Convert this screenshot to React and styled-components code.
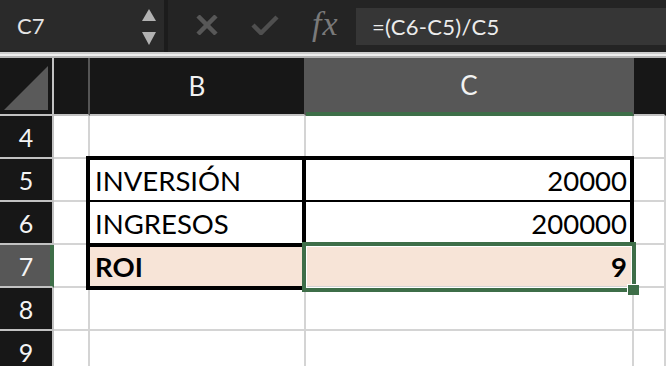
import React from "react";
import styled, { createGlobalStyle, css } from "styled-components";

const GREEN = "#3e6e48";
const GRID = "#d4d4d4";
const HEAD_LINE = "#c2c2c2";
const PEACH = "#f7e4d7";
const THICK = 4;

const GlobalStyle = createGlobalStyle`
  html, body {
    margin: 0;
    padding: 0;
    background: #fff;
    overflow: hidden;
  }
  body {
    font-family: Lato, "Open Sans", sans-serif;
  }
`;

// A and D are only partly visible, so their headers carry no label
const columns = [
  { key: "A", line: "#555555" },
  { key: "B", label: "B", line: "#575757" },
  { key: "C", label: "C", line: "#575757", active: true },
  { key: "D", line: "transparent" },
];

const rows = [
  { n: 4, cells: {} },
  {
    n: 5,
    cells: {
      B: { text: "INVERSIÓN", frame: { t: THICK, l: THICK, r: THICK, b: 2 } },
      C: { text: "20000", align: "right", frame: { t: THICK, r: THICK, b: 2 } },
    },
  },
  {
    n: 6,
    cells: {
      B: { text: "INGRESOS", frame: { l: THICK, r: THICK, b: THICK } },
      C: { text: "200000", align: "right", frame: { r: THICK, b: THICK } },
    },
  },
  {
    n: 7,
    active: true,
    cells: {
      B: { text: "ROI", bold: true, fill: PEACH, frame: { l: THICK, r: THICK, b: THICK } },
      C: { text: "9", bold: true, fill: PEACH, align: "right", selected: true },
    },
  },
  { n: 8, cells: {} },
  { n: 9, cells: {} },
];

const App = () => {
  return (
    <Window>
      <GlobalStyle />
      <TopBar>
        <NameBox>
          C7
          <svg width="14" height="36" viewBox="0 0 14 36">
            <polygon points="7,0 14,12 0,12" fill="#b2b2b2" />
            <polygon points="0,23 14,23 7,36" fill="#b2b2b2" />
          </svg>
        </NameBox>
        <Divider />
        <Tools>
          <svg width="22" height="20" viewBox="0 0 22 20">
            <path d="M2 1 L20 19 M20 1 L2 19" stroke="#575757" strokeWidth="4.5" fill="none" />
          </svg>
          <svg width="28" height="20" viewBox="0 0 28 20">
            <path d="M2 10 L10 18 L26 2" stroke="#4f4f4f" strokeWidth="4.5" fill="none" />
          </svg>
          <FxLabel>fx</FxLabel>
        </Tools>
        <FormulaBox>=(C6-C5)/C5</FormulaBox>
      </TopBar>
      <Band />
      <Sheet>
        <HeadCell $line={HEAD_LINE}>
          <Corner width="52" height="56" viewBox="0 0 52 56">
            <polygon points="4,52 48,8 48,52" fill="#5a5a5a" />
          </Corner>
        </HeadCell>
        {columns.map((c) => (
          <HeadCell key={c.key} $line={c.line} $active={c.active}>
            {c.label}
          </HeadCell>
        ))}
        {rows.map((r) => (
          <React.Fragment key={r.n}>
            <RowHead $active={r.active}>{r.n}</RowHead>
            {columns.map((c) => {
              const cell = r.cells[c.key] || {};
              return (
                <Cell
                  key={c.key}
                  $fill={cell.fill}
                  $bold={cell.bold}
                  $align={cell.align}
                  $frame={cell.frame}
                >
                  {cell.text}
                  {cell.selected && (
                    <Selection>
                      <FillHandle />
                    </Selection>
                  )}
                </Cell>
              );
            })}
          </React.Fragment>
        ))}
      </Sheet>
    </Window>
  );
};

export default App;

const Window = styled.div`
  width: 666px;
  height: 366px;
  overflow: hidden;
  display: flex;
  flex-direction: column;
  background: #fff;
`;

const TopBar = styled.div`
  display: flex;
  height: 52px;
  flex-shrink: 0;
  background: #242424;
`;

const NameBox = styled.div`
  width: 164px;
  height: 50px;
  box-sizing: border-box;
  padding: 0 8px 0 17px;
  background: #2a2a2a;
  display: flex;
  align-items: center;
  justify-content: space-between;
  color: #e4e4e4;
  font-size: 22px;

  svg {
    margin-top: 4px;
  }
`;

const Divider = styled.div`
  width: 4px;
  background: #1c1c1c;
`;

const Tools = styled.div`
  width: 188px;
  height: 50px;
  box-sizing: border-box;
  padding-left: 28px;
  display: flex;
  align-items: center;
  gap: 33px;
`;

const FxLabel = styled.span`
  font-family: "Liberation Serif", "DejaVu Serif", serif;
  font-style: italic;
  font-size: 34px;
  letter-spacing: 1px;
  color: #7a7a7a;
  margin-top: -2px;
`;

const FormulaBox = styled.div`
  flex: 1;
  height: 37px;
  margin-top: 8px;
  box-sizing: border-box;
  padding-left: 16px;
  background: #363636;
  display: flex;
  align-items: center;
  color: #ececec;
  font-size: 22px;
  letter-spacing: 0.3px;
`;

const Band = styled.div`
  height: 6px;
  flex-shrink: 0;
  background: linear-gradient(#cdcdcd 0 2px, #eeeeee 2px 4px, #b4b4b4 4px 6px);
`;

const Sheet = styled.div`
  display: grid;
  grid-template-columns: 54px 36px 216px 328px 1fr;
  grid-template-rows: 58px repeat(6, 43px);
`;

const HeadCell = styled.div`
  box-sizing: border-box;
  display: flex;
  align-items: center;
  justify-content: center;
  background: ${(p) => (p.$active ? "#575757" : "#171717")};
  color: #f2f2f2;
  font-size: 26px;
  border-right: 2px solid ${(p) => p.$line};
  border-bottom: ${(p) => (p.$active ? `4px solid ${GREEN}` : `2px solid ${HEAD_LINE}`)};
`;

const Corner = styled.svg`
  display: block;
`;

const RowHead = styled.div`
  box-sizing: border-box;
  display: flex;
  align-items: center;
  justify-content: center;
  background: ${(p) => (p.$active ? "#575757" : "#171717")};
  color: #f4f4f4;
  font-size: 25px;
  border-right: 2px solid ${(p) => (p.$active ? GREEN : HEAD_LINE)};
  border-bottom: 2px solid ${HEAD_LINE};
  box-shadow: ${(p) => (p.$active ? `inset -2px 0 0 ${GREEN}` : "none")};
`;

const Cell = styled.div`
  position: relative;
  box-sizing: border-box;
  display: flex;
  align-items: flex-end;
  justify-content: ${(p) => (p.$align === "right" ? "flex-end" : "flex-start")};
  padding: 0 5px 2px;
  background: ${(p) => p.$fill || "#fff"};
  border-right: 2px solid ${GRID};
  border-bottom: 2px solid ${GRID};
  color: #000;
  font-size: 27.5px;
  line-height: 34px;
  font-weight: ${(p) => (p.$bold ? 700 : 400)};
  white-space: nowrap;

  ${(p) =>
    p.$frame &&
    css`
      &::after {
        content: "";
        position: absolute;
        z-index: 1;
        pointer-events: none;
        top: ${p.$frame.t ? -3 : -2}px;
        left: ${p.$frame.l ? -p.$frame.l : 0}px;
        right: -2px;
        bottom: ${-Math.max(p.$frame.b || 0, 2)}px;
        border-style: solid;
        border-color: #000;
        border-width: ${p.$frame.t || 0}px ${p.$frame.r || 0}px ${p.$frame.b || 0}px
          ${p.$frame.l || 0}px;
      }
    `}
`;

const Selection = styled.span`
  position: absolute;
  z-index: 2;
  top: -3px;
  left: -4px;
  right: -4px;
  bottom: -6px;
  border: 4px solid ${GREEN};
  box-shadow: inset 0 0 0 1px #fff;
  pointer-events: none;
`;

const FillHandle = styled.span`
  position: absolute;
  right: -7px;
  bottom: -7px;
  width: 11px;
  height: 10px;
  background: ${GREEN};
  border-top: 1px solid #fff;
  border-left: 1px solid #fff;
`;
